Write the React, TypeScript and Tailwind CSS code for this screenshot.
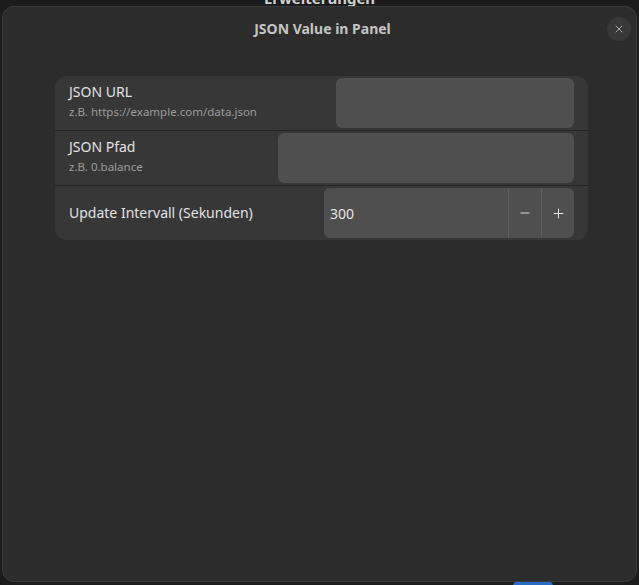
import { Minus, Plus, X } from "lucide-react";

type RowProps = {
  title: string;
  subtitle?: string;
  children: React.ReactNode;
};

function Row({ title, subtitle, children }: RowProps) {
  return (
    <div className="flex h-[54px] items-center justify-between pl-[14px] pr-[14px]">
      <div className={subtitle ? "flex flex-col pb-[4px]" : "flex flex-col pb-[1px]"}>
        <span className="text-[14px] leading-[17px] text-[#e2e2e2]">{title}</span>
        {subtitle && (
          <span className="mt-[4px] text-[11.5px] leading-[16px] text-[#9c9c9c]">{subtitle}</span>
        )}
      </div>
      {children}
    </div>
  );
}

export default function App() {
  return (
    <div
      className="relative h-[585px] w-[639px] overflow-hidden bg-[#1c1c1c] pt-[6px]"
      style={{ fontFamily: '"Noto Sans", "Open Sans", sans-serif' }}
    >
      {/* window behind the dialog */}
      <div className="absolute left-0 right-0 top-[-13px] text-center text-[15px] font-bold text-[#d0d0d0]">
        Erweiterungen
      </div>
      <div className="absolute bottom-[-6px] left-[513px] h-[10px] w-[40px] rounded-full bg-[#2a6cc4]" />

      {/* DIALOG */}
      <div className="relative mx-[2px] h-[576px] rounded-[12px] border border-[#3a3a3a] bg-[#2c2c2c]">
        <div className="relative flex h-[43px] items-center justify-center pl-[6px]">
          <span className="text-[14px] font-bold text-[#c4c4c4]">JSON Value in Panel</span>
          <button className="absolute right-[5px] top-[10px] flex h-[24px] w-[24px] items-center justify-center rounded-full bg-[#383838] text-[#a8a8a8]">
            <X size={12} strokeWidth={2} />
          </button>
        </div>

        <div className="pl-[52px] pr-[48px] pt-[26px]">
          <div className="overflow-hidden rounded-[12px] bg-[#373737]">
            <Row title="JSON URL" subtitle="z.B. https://example.com/data.json">
              <div className="h-[50px] w-[238px] rounded-[6px] bg-[#4f4f4f]" />
            </Row>
            <div className="h-px bg-[#242424]" />
            <Row title="JSON Pfad" subtitle="z.B. 0.balance">
              <div className="h-[50px] w-[296px] rounded-[6px] bg-[#4f4f4f]" />
            </Row>
            <div className="h-px bg-[#242424]" />
            <Row title="Update Intervall (Sekunden)">
              <div className="flex h-[50px] w-[250px] rounded-[6px] bg-[#4f4f4f] text-[#e6e6e6]">
                <span className="flex flex-1 items-center pl-[6px] text-[14px]">300</span>
                <div className="w-px bg-[#5e5e5e]" />
                <div className="flex w-[32px] items-center justify-center">
                  <Minus size={14} strokeWidth={1.6} />
                </div>
                <div className="w-px bg-[#5e5e5e]" />
                <div className="flex w-[32px] items-center justify-center">
                  <Plus size={15} strokeWidth={1.6} />
                </div>
              </div>
            </Row>
          </div>
        </div>
      </div>
    </div>
  );
}
